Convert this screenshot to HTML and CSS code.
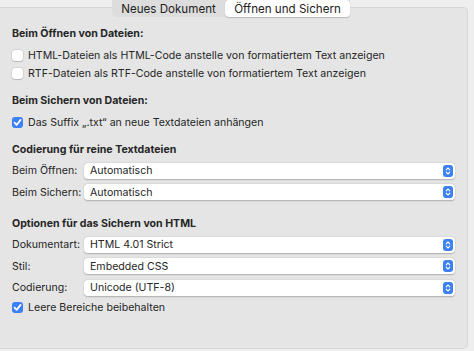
FILE: index.html
```html
<!DOCTYPE html>
<html lang="de">
<head>
  <meta charset="UTF-8" />
  <title>Einstellungen</title>
  <link rel="stylesheet" href="styles.css">
</head>
<body>
  <div class="tabs">
    <span class="tab">Neues Dokument</span>
    <span class="tab active">Öffnen und Sichern</span>
  </div>

  <div class="panel">
    <div class="section">
      <div class="heading">Beim Öffnen von Dateien:</div>
      <label class="check"><span class="box"></span>HTML-Dateien als HTML-Code anstelle von formatiertem Text anzeigen</label>
      <label class="check"><span class="box"></span>RTF-Dateien als RTF-Code anstelle von formatiertem Text anzeigen</label>
    </div>

    <div class="section">
      <div class="heading">Beim Sichern von Dateien:</div>
      <label class="check"><span class="box on"><svg viewBox="0 0 10 10"><path d="M2.3 5.2 L4.2 7.2 L7.8 2.6" /></svg></span>Das Suffix „.txt“ an neue Textdateien anhängen</label>
    </div>

    <div class="section">
      <div class="heading tight">Codierung für reine Textdateien</div>
      <div class="row">
        <span class="label">Beim Öffnen:</span>
        <div class="select">Automatisch<span class="arrows"><svg viewBox="0 0 10 12"><path d="M3.2 4.8 L5 3 L6.8 4.8 M3.2 7.2 L5 9 L6.8 7.2" /></svg></span></div>
      </div>
      <div class="row">
        <span class="label">Beim Sichern:</span>
        <div class="select">Automatisch<span class="arrows"><svg viewBox="0 0 10 12"><path d="M3.2 4.8 L5 3 L6.8 4.8 M3.2 7.2 L5 9 L6.8 7.2" /></svg></span></div>
      </div>
    </div>

    <div class="section wide">
      <div class="heading tight">Optionen für das Sichern von HTML</div>
      <div class="row">
        <span class="label">Dokumentart:</span>
        <div class="select">HTML 4.01 Strict<span class="arrows"><svg viewBox="0 0 10 12"><path d="M3.2 4.8 L5 3 L6.8 4.8 M3.2 7.2 L5 9 L6.8 7.2" /></svg></span></div>
      </div>
      <div class="row">
        <span class="label">Stil:</span>
        <div class="select">Embedded CSS<span class="arrows"><svg viewBox="0 0 10 12"><path d="M3.2 4.8 L5 3 L6.8 4.8 M3.2 7.2 L5 9 L6.8 7.2" /></svg></span></div>
      </div>
      <div class="row">
        <span class="label">Codierung:</span>
        <div class="select">Unicode (UTF-8)<span class="arrows"><svg viewBox="0 0 10 12"><path d="M3.2 4.8 L5 3 L6.8 4.8 M3.2 7.2 L5 9 L6.8 7.2" /></svg></span></div>
      </div>
      <label class="check"><span class="box on"><svg viewBox="0 0 10 10"><path d="M2.3 5.2 L4.2 7.2 L7.8 2.6" /></svg></span>Leere Bereiche beibehalten</label>
    </div>
  </div>
</body>
</html>
```

FILE: styles.css
```css
body {
  margin: 0;
  background: #eeeeee;
  font-family: Inter, "Liberation Sans", sans-serif;
  font-size: 10.6px;
  color: #262626;
  height: 351px;
  overflow: hidden;
}

.tabs {
  position: relative;
  z-index: 1;
  display: flex;
  width: max-content;
  margin-left: 112px;
  height: 17px;
  background: #dddddd;
  border-radius: 0 0 5px 5px;
  font-size: 11.6px;
  color: #222;
  white-space: nowrap;
}

.tab {
  display: flex;
  align-items: center;
  justify-content: center;
  width: 113px;
}

.tab.active {
  background: #ffffff;
  border-radius: 4px;
  width: 125px;
  box-shadow: 0 0.5px 1px rgba(0,0,0,0.2);
}

.panel {
  margin-top: -10px;
  width: 468px;
  height: 342px;
  background: #e5e5e5;
  border: 1px solid #d6d6d6;
  border-left: none;
  border-radius: 0 5px 5px 0;
  padding: 16px 0 0 12px;
  box-sizing: border-box;
}

.section + .section {
  margin-top: 9px;
}

.section.wide {
  margin-top: 11px;
}

.heading {
  font-weight: 700;
  line-height: 20px;
  margin-bottom: 2px;
}

.heading.tight {
  margin-bottom: 0;
}

.check {
  display: flex;
  align-items: center;
  height: 18px;
  gap: 5px;
}

.box {
  width: 11px;
  height: 11px;
  box-sizing: border-box;
  background: #ffffff;
  border-radius: 3px;
  box-shadow: 0 0 0 0.5px rgba(0,0,0,0.12), 0 0.5px 1px rgba(0,0,0,0.15);
  display: flex;
}

.box.on {
  background: #3b80f6;
  box-shadow: none;
}

.box svg {
  width: 11px;
  height: 11px;
}

.box path {
  fill: none;
  stroke: #fff;
  stroke-width: 1.6;
  stroke-linecap: round;
  stroke-linejoin: round;
}

.row {
  display: flex;
  align-items: center;
  height: 21.5px;
}

.label {
  width: 72px;
}

.select {
  position: relative;
  width: 371px;
  height: 16px;
  background: #ffffff;
  border-radius: 4px;
  box-shadow: 0 0.5px 1.5px rgba(0,0,0,0.25);
  box-sizing: border-box;
  padding-left: 6px;
  display: flex;
  align-items: center;
}

.arrows {
  position: absolute;
  right: 2px;
  top: 2px;
  width: 10px;
  height: 12px;
  background: #3b80f6;
  border-radius: 3px;
  display: flex;
}

.arrows svg {
  width: 10px;
  height: 12px;
}

.arrows path {
  fill: none;
  stroke: #fff;
  stroke-width: 1.1;
  stroke-linecap: round;
  stroke-linejoin: round;
}
```
